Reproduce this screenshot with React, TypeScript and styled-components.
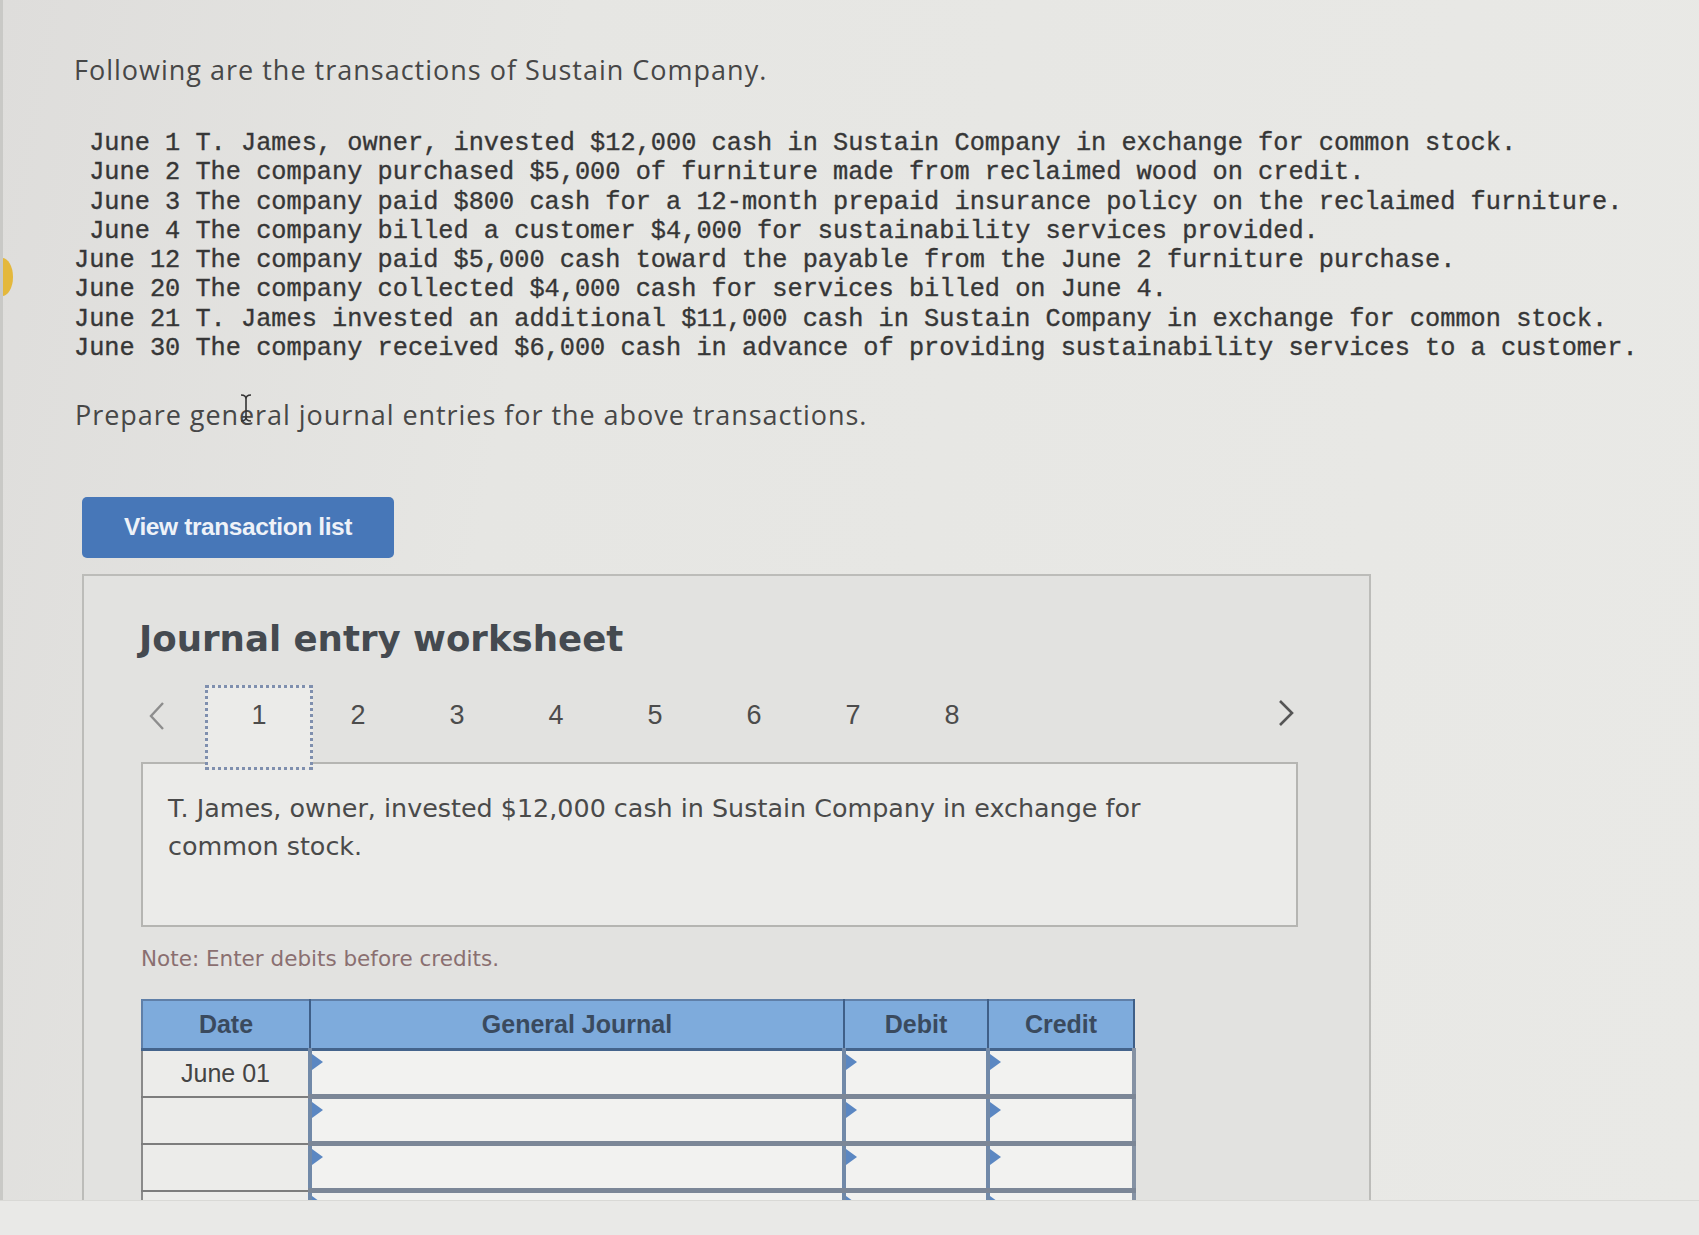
import styled, { createGlobalStyle } from 'styled-components';

const transactions = [
  { date: 'June 1', text: 'T. James, owner, invested $12,000 cash in Sustain Company in exchange for common stock.' },
  { date: 'June 2', text: 'The company purchased $5,000 of furniture made from reclaimed wood on credit.' },
  { date: 'June 3', text: 'The company paid $800 cash for a 12-month prepaid insurance policy on the reclaimed furniture.' },
  { date: 'June 4', text: 'The company billed a customer $4,000 for sustainability services provided.' },
  { date: 'June 12', text: 'The company paid $5,000 cash toward the payable from the June 2 furniture purchase.' },
  { date: 'June 20', text: 'The company collected $4,000 cash for services billed on June 4.' },
  { date: 'June 21', text: 'T. James invested an additional $11,000 cash in Sustain Company in exchange for common stock.' },
  { date: 'June 30', text: 'The company received $6,000 cash in advance of providing sustainability services to a customer.' },
];

const pages = [1, 2, 3, 4, 5, 6, 7, 8];

// 입력 행: 첫 행만 날짜가 채워져 있음
const rows = ['June 01', '', '', ''];

const GlobalStyle = createGlobalStyle`
  html, body {
    margin: 0;
    padding: 0;
    background: #e6e6e3;
  }
  * {
    box-sizing: border-box;
  }
`;

const App = () => {
  return (
    <>
      <GlobalStyle />
      <Screen>
        <EdgeDot />
        <Heading>Following are the transactions of Sustain Company.</Heading>
        <TxList>
          {transactions.map((tx) => (
            <TxRow key={tx.date}>
              <TxDate>{tx.date}</TxDate>
              <span>{tx.text}</span>
            </TxRow>
          ))}
        </TxList>
        <Prompt>
          Prepare gen
          <CursorWrap>
            <svg width="14" height="30" viewBox="0 0 14 30">
              <path d="M2 2 Q7 2 7 6 L7 24 Q7 28 2 28 M12 2 Q7 2 7 6 M7 24 Q7 28 12 28" fill="none" stroke="#333" strokeWidth="1.6" />
            </svg>
          </CursorWrap>
          eral journal entries for the above transactions.
        </Prompt>
        <ListButton>View transaction list</ListButton>

        <Worksheet>
          <Title>Journal entry worksheet</Title>
          <Pager>
            <Arrow>
              <svg width="20" height="30" viewBox="0 0 20 30">
                <polyline points="16,2 4,15 16,28" fill="none" stroke="#8d8d8d" strokeWidth="2.4" />
              </svg>
            </Arrow>
            {pages.map((p) => (
              <PageTab key={p} $active={p === 1}>
                {p}
              </PageTab>
            ))}
            <ArrowRight>
              <svg width="20" height="28" viewBox="0 0 20 28">
                <polyline points="4,2 16,14 4,26" fill="none" stroke="#555" strokeWidth="2.6" />
              </svg>
            </ArrowRight>
          </Pager>
          <Description>
            <DescText>
              T. James, owner, invested $12,000 cash in Sustain Company in exchange for common stock.
            </DescText>
          </Description>
          <Note>Note: Enter debits before credits.</Note>

          <Table>
            <thead>
              <tr>
                <Th style={{ width: 168 }}>Date</Th>
                <Th style={{ width: 534 }}>General Journal</Th>
                <Th style={{ width: 144 }}>Debit</Th>
                <Th style={{ width: 146 }}>Credit</Th>
              </tr>
            </thead>
            <tbody>
              {rows.map((date, i) => (
                <tr key={i}>
                  <DateCell>{date}</DateCell>
                  <InputCell />
                  <InputCell />
                  <InputCell $last />
                </tr>
              ))}
            </tbody>
          </Table>
        </Worksheet>
      </Screen>
      <Footer />
    </>
  );
};

const Screen = styled.div`
  position: relative;
  height: 1200px;
  overflow: hidden;
  padding-left: 71px;
  padding-top: 54px;
  background: linear-gradient(100deg, #dedddb 0%, #e6e6e3 30%, #e9e9e6 100%);
  border-left: 3px solid #c9c9c6;
`;

const EdgeDot = styled.div`
  position: absolute;
  left: -12px;
  top: 258px;
  width: 22px;
  height: 38px;
  border-radius: 50%;
  background: #e4b83c;
`;

const Heading = styled.div`
  font-family: 'Open Sans', 'Liberation Sans', sans-serif;
  font-size: 27px;
  letter-spacing: 1px;
  line-height: 32px;
  color: #474747;
`;

const TxList = styled.div`
  margin-top: 43px;
  font-family: 'Liberation Mono', 'DejaVu Sans Mono', monospace;
  font-size: 25.3px;
  line-height: 29.25px;
  color: #363636;
  -webkit-text-stroke: 0.35px #3a3a3a;
`;

const TxRow = styled.div`
  display: grid;
  grid-template-columns: 7ch 1fr;
  column-gap: 1ch;
  white-space: pre;
`;

const TxDate = styled.span`
  text-align: right;
`;

const Prompt = styled.div`
  margin-top: 35.6px;
  margin-left: 1px;
  font-family: 'Open Sans', 'Liberation Sans', sans-serif;
  font-size: 27px;
  letter-spacing: 0.95px;
  line-height: 32px;
  color: #474747;
`;

const CursorWrap = styled.span`
  position: relative;
  display: inline-block;
  width: 0;
  & > svg {
    position: absolute;
    left: 0;
    top: -32px;
  }
`;

const ListButton = styled.button`
  display: block;
  margin-top: 66px;
  margin-left: 8px;
  width: 312px;
  height: 61px;
  border: none;
  border-radius: 5px;
  background: #4777b8;
  color: #eef2f8;
  font-family: 'Liberation Sans', Arial, sans-serif;
  font-weight: bold;
  font-size: 24.5px;
  letter-spacing: -0.4px;
  padding: 0;
`;

const Worksheet = styled.div`
  margin-top: 16px;
  margin-left: 8px;
  width: 1289px;
  height: 700px;
  border: 2px solid #bcbcb9;
  background: #e2e2e0;
  padding: 43px 71px 0 57px;
`;

const Title = styled.div`
  margin-left: -2px;
  font-family: 'DejaVu Sans', Verdana, sans-serif;
  font-weight: bold;
  font-size: 35.6px;
  line-height: 40px;
  color: #454a50;
`;

const Pager = styled.div`
  margin-top: 26px;
  margin-bottom: -8px;
  height: 85px;
  display: flex;
  align-items: flex-start;
  position: relative;
  z-index: 1;
`;

const Arrow = styled.div`
  width: 68.5px;
  padding-left: 6px;
  padding-top: 16px;
`;

const ArrowRight = styled.div`
  margin-left: auto;
  margin-right: 2px;
  padding-top: 14px;
  width: 20px;
`;

const PageTab = styled.div<{ $active?: boolean }>`
  width: ${(p) => (p.$active ? '108px' : '99px')};
  margin: ${(p) => (p.$active ? '0 -4.5px' : '0')};
  height: 85px;
  padding-top: ${(p) => (p.$active ? '12px' : '15px')};
  text-align: center;
  font-family: 'Liberation Sans', Arial, sans-serif;
  font-size: 27px;
  line-height: 30px;
  color: #4c4c4c;
  background: ${(p) => (p.$active ? '#ebebe9' : 'transparent')};
  border: ${(p) => (p.$active ? '3px dotted #7f8fae' : 'none')};
`;

const Description = styled.div`
  height: 165px;
  border: 2px solid #b5b5b2;
  background: #ebebe9;
  padding: 25px 25px 0 25px;
`;

const DescText = styled.p`
  margin: 0;
  max-width: 1060px;
  font-family: 'DejaVu Sans', Verdana, sans-serif;
  font-size: 25.4px;
  line-height: 38px;
  color: #4a4a4a;
`;

const Note = styled.div`
  margin-top: 19px;
  font-family: 'DejaVu Sans', Verdana, sans-serif;
  font-size: 21.5px;
  line-height: 26px;
  color: #8a6f70;
`;

const Table = styled.table`
  margin-top: 27px;
  border-collapse: collapse;
  table-layout: fixed;
  width: 992px;
`;

const Th = styled.th`
  height: 50px;
  padding: 0;
  background: #7eabdc;
  border-top: 2px solid #5f7fa8;
  border-right: 2px solid #3f5f88;
  border-bottom: 3px solid #44648c;
  font-family: 'Liberation Sans', Arial, sans-serif;
  font-weight: bold;
  font-size: 25px;
  color: #3a4a5e;
  &:first-child {
    border-left: 2px solid #5f7fa8;
  }
`;

const DateCell = styled.td`
  height: 47px;
  padding: 0;
  text-align: center;
  background: #ececea;
  border-left: 2px solid #8a8a8a;
  border-bottom: 2px solid #7d7d7d;
  font-family: 'Liberation Sans', Arial, sans-serif;
  font-size: 25px;
  color: #444;
`;

const InputCell = styled.td<{ $last?: boolean }>`
  position: relative;
  height: 47px;
  padding: 0;
  background: #f2f2f0;
  border-left: 4px solid #7189a8;
  border-right: ${(p) => (p.$last ? '4px solid #8592a4' : 'none')};
  border-bottom: 5px solid #7c8797;
  &::before {
    content: '';
    position: absolute;
    left: 0;
    top: 3px;
    border-top: 8px solid transparent;
    border-bottom: 8px solid transparent;
    border-left: 11px solid #5b87c2;
  }
`;

const Footer = styled.div`
  height: 35px;
  background: #e9e9e7;
  border-top: 1px solid #d9d9d6;
`;

export default App;
